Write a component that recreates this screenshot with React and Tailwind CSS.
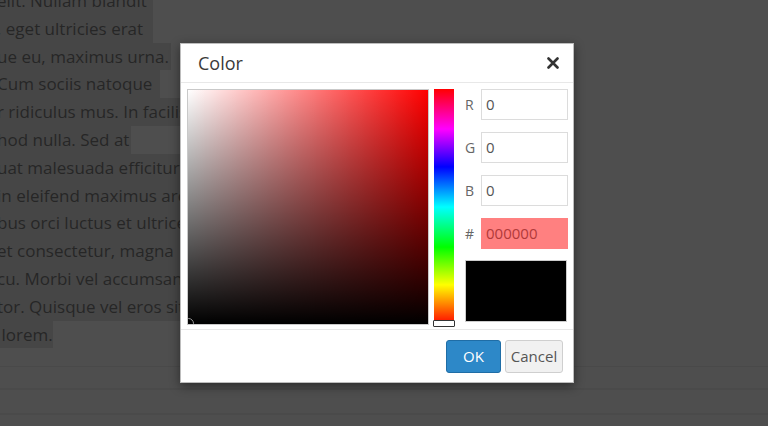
import React from 'react';

// Background text, already cut at the left edge like the page behind the modal
const lines = [
  { text: 'elit. Nullam blandit', hl: 153 },
  { text: ', eget ultricies erat', hl: 153 },
  { text: 'ue eu, maximus urna.', hl: 171 },
  { text: 'Cum sociis natoque', hl: 160 },
  { text: 'r ridiculus mus. In facilisis', hl: 200 },
  { text: 'hod nulla. Sed at', hl: 131 },
  { text: 'uat malesuada efficitur', hl: 200 },
  { text: 'in eleifend maximus arcu', hl: 200 },
  { text: 'bus orci luctus et ultrices', hl: 200 },
  { text: 'et consectetur, magna', hl: 200 },
  { text: 'cu. Morbi vel accumsan', hl: 200 },
  { text: 'tor. Quisque vel eros sit', hl: 200 },
  { text: ' lorem.', hl: 53 },
];

const ColorField = ({ label, value, hex }) => (
  <div className="flex items-center h-[31px]">
    <span className="w-[16px] text-[14px] text-[#666] leading-none">{label}</span>
    <div
      className={
        hex
          ? 'w-[87px] h-[31px] border border-[#ff8080] bg-[#ff8080] text-[#b13a3a] text-[15px] flex items-center px-[4px]'
          : 'w-[87px] h-[31px] border border-[#dcdcdc] bg-white text-[#555] text-[15px] flex items-center px-[4px]'
      }
    >
      {value}
    </div>
  </div>
);

const App = () => {
  return (
    <div
      className="relative w-[768px] h-[426px] overflow-hidden bg-[#4e4e4e]"
      style={{ fontFamily: '"Open Sans", "Noto Sans", Arial, sans-serif' }}
    >
      {/* Page behind the overlay */}
      <div className="flex flex-col mt-[-13px]">
        {lines.map((l, i) => (
          <div key={i} className="relative h-[27.8px]">
            <div className="absolute left-0 top-0 h-full bg-[#464646]" style={{ width: l.hl }} />
            <div className="relative whitespace-pre text-[17px] leading-[27.8px] text-[#262626] ml-[-3px]">
              {l.text}
            </div>
          </div>
        ))}
        <div className="h-[19px] border-b border-[#494949]" />
        <div className="h-[23px] border-b-2 border-[#4a4a4a]" />
        <div className="h-[25px] border-b-2 border-[#4a4a4a]" />
      </div>

      {/* Color picker dialog */}
      <div className="absolute left-[180px] top-[43px] w-[394px] h-[340px] bg-white border border-[#bdbdbd] shadow-[0_3px_10px_rgba(0,0,0,0.45)] flex flex-col">
        <div className="h-[39px] flex items-center justify-between px-[17px] border-b border-[#e8e8e8]">
          <span className="text-[18px] font-medium text-[#3a3a3a]">Color</span>
          <svg width="12" height="12" viewBox="0 0 12 12" className="mr-[-3px]">
            <path d="M1.5 1.5 L10.5 10.5 M10.5 1.5 L1.5 10.5" stroke="#333" strokeWidth="2.6" strokeLinecap="round" />
          </svg>
        </div>

        <div className="flex pt-[6px] pl-[6px] h-[247px] border-b border-[#e8e8e8]">
          {/* Saturation / value square */}
          <div className="relative w-[242px] h-[236px] border border-[#c9c9c9] overflow-hidden bg-[#ff0000]">
            <div className="absolute inset-0 bg-gradient-to-r from-white to-transparent" />
            <div className="absolute inset-0 bg-gradient-to-b from-transparent to-black" />
            <div className="absolute left-[-5px] bottom-[-5px] w-[11px] h-[11px] rounded-full border border-[#999]" />
          </div>

          {/* Hue slider */}
          <div className="relative ml-[5px] w-[20px] h-[236px] bg-[linear-gradient(to_bottom,#ff0000_0%,#ff00ff_17%,#0000ff_33%,#00ffff_50%,#00ff00_67%,#ffff00_83%,#ff0000_100%)]">
            <div className="absolute left-[-1px] bottom-[-2px] w-[22px] h-[7px] bg-white border border-[#333] rounded-[1px]" />
          </div>

          {/* Fields */}
          <div className="ml-[11px] flex flex-col gap-[12px]">
            <ColorField label="R" value="0" />
            <ColorField label="G" value="0" />
            <ColorField label="B" value="0" />
            <ColorField label="#" value="000000" hex />
            <div className="mt-[-1px] w-[102px] h-[62px] bg-black border border-[#ccc]" />
          </div>
        </div>

        <div className="flex-1 flex items-start justify-end pt-[10px] pr-[10px] gap-[4px]">
          <button className="w-[55px] h-[33px] bg-[#2d88c8] border border-[#1f6da6] rounded-[3px] text-white text-[15px]">
            OK
          </button>
          <button className="w-[58px] h-[33px] bg-[#f1f1f1] border border-[#cfcfcf] rounded-[3px] text-[#555] text-[15px]">
            Cancel
          </button>
        </div>
      </div>
    </div>
  );
};

export default App;
